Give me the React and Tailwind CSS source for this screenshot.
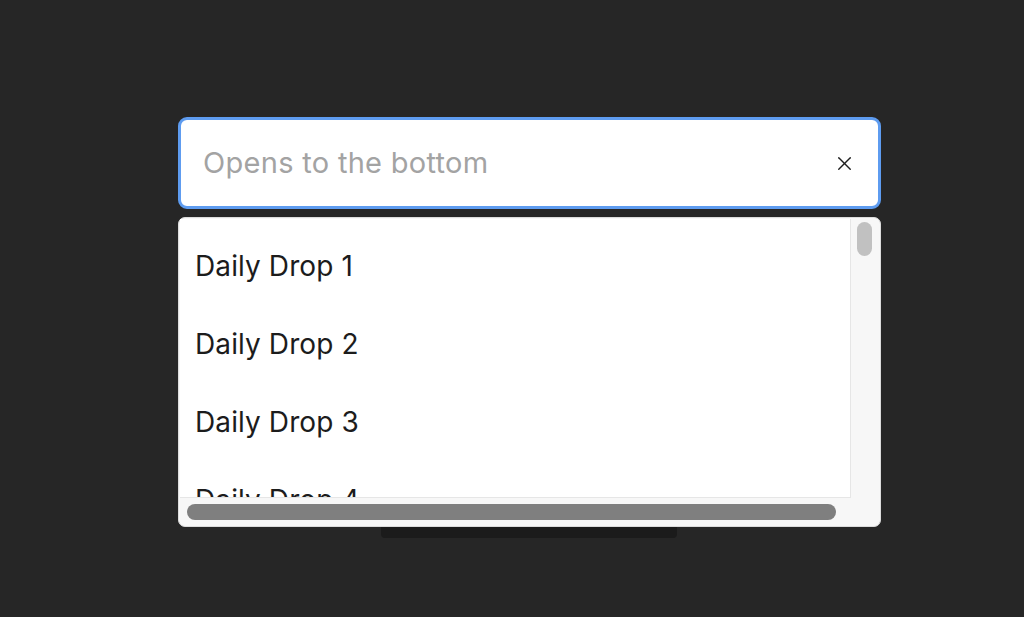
import { X } from 'lucide-react';

const items = ['Daily Drop 1', 'Daily Drop 2', 'Daily Drop 3', 'Daily Drop 4', 'Daily Drop 5'];

export default function App() {
  return (
    <div className="min-h-screen w-full bg-[#262626] pt-[117px] pl-[178px] font-['Inter',sans-serif]">
      <div className="w-[703px]">
        {/* combobox input */}
        <div className="flex h-[92px] items-center justify-between rounded-[9px] border-[3px] border-[#5e9cf0] bg-white pl-[22px] pr-[22px]">
          <span className="text-[29px] tracking-[0.3px] text-[#a3a3a3]">Opens to the bottom</span>
          <X size={23} strokeWidth={1.5} className="text-[#1f1f1f]" />
        </div>

        {/* dropdown list */}
        <div className="mt-[8px] flex h-[310px] flex-col rounded-[7px] border border-[#dcdcdc] bg-[#f7f7f7] p-px">
          <div className="flex h-[279px]">
            <div className="h-full w-[671px] overflow-hidden border-r border-b border-[#e6e6e6] bg-white pt-[8px]">
              {items.map((item) => (
                <div key={item} className="flex h-[78px] items-center pl-[15px] text-[28px] tracking-[0.1px] text-[#1c1c1c]">
                  {item}
                </div>
              ))}
            </div>
            <div className="flex-1 pl-[6px] pt-[3px]">
              <div className="h-[34px] w-[15px] rounded-full bg-[#c1c1c1]" />
            </div>
          </div>
          <div className="pl-[7px] pt-[6px]">
            <div className="h-[16px] w-[649px] rounded-full bg-[#7f7f7f]" />
          </div>
        </div>
        <div className="ml-[203px] h-[11px] w-[296px] rounded-b-[4px] bg-[#1b1b1b]" />
      </div>
    </div>
  );
}
